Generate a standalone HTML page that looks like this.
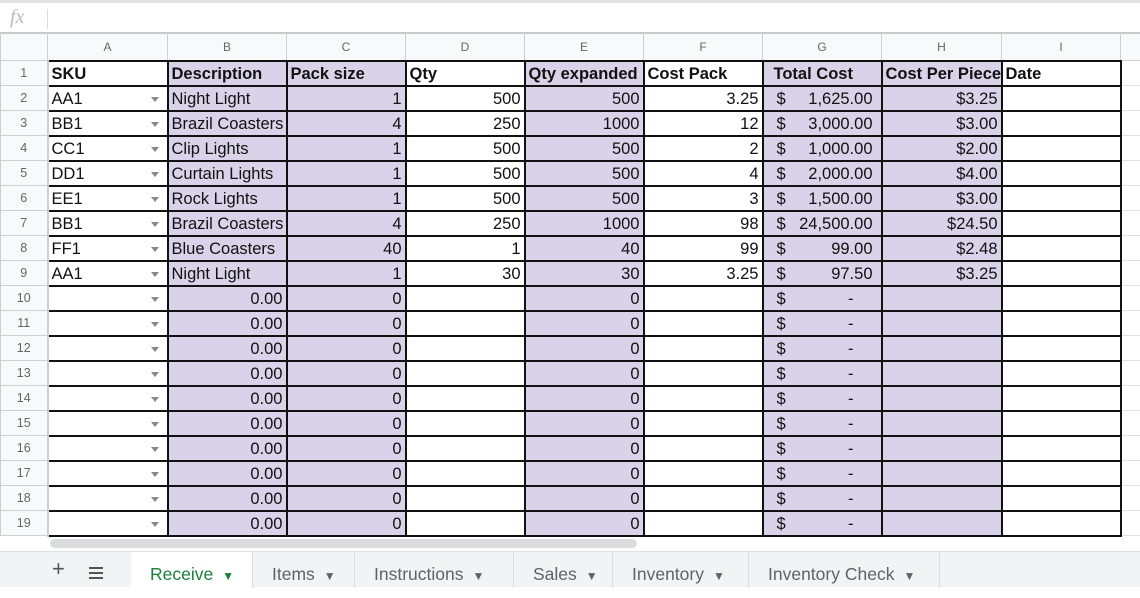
<!DOCTYPE html>
<html><head><meta charset="utf-8"><style>
*{margin:0;padding:0;box-sizing:border-box}
body{width:1140px;height:587px;overflow:hidden;background:#fff;font-family:"Liberation Sans",Arial,sans-serif;position:relative}
.fx{position:absolute;left:0;top:0;width:1140px;height:33px;border-top:3px solid #e3e3e3;border-bottom:1px solid #c8c8c8}
.fx i{position:absolute;left:10px;top:3px;font-family:"Liberation Serif",serif;font-size:20px;color:#bbb}
.fx b{position:absolute;left:47px;top:6px;width:1px;height:20px;background:#ddd}
table{position:absolute;left:0;top:33px;width:1140px;border-collapse:collapse;table-layout:fixed}
td{height:25px;font-size:16.5px;color:#111;padding:3px 3px 0;white-space:nowrap;overflow:hidden;border:2px solid #111;position:relative}
tr.h td{height:27px;padding:0;background:#f8f9fa;color:#666;font-size:12px;text-align:center;border:1px solid #cfcfcf;font-weight:normal}
td.rh{padding:0;background:#f8f9fa;color:#666;font-size:12.5px;text-align:center;border:1px solid #cfcfcf;border-right:2px solid #cfcfcf}
td.p{background:#d9d2e9}
td.r{text-align:right}
td.x{border:1px solid #e2e2e2;border-left:2px solid #111}
tr.b td:not(.rh):not(.x){font-weight:bold}
.dd:after{content:"";position:absolute;right:8px;top:10px;border:4px solid transparent;border-top:5px solid #888}
.g{display:flex;justify-content:space-between;padding:0 5px 0 10px}
.g.d{padding-right:24px}
.sb{position:absolute;left:50px;top:539px;width:587px;height:9px;border-radius:5px;background:#dadce0}
.tabs{position:absolute;left:0;top:551px;width:1140px;height:36px;background:#f1f3f4;border-top:1px solid #e0e0e0}
.tab{position:absolute;top:0;height:36px;line-height:44px;font-size:17.5px;color:#5f6368;border-right:1px solid #ddd;padding-left:19px}
.tab.a{background:#fff;color:#188038}
.tab span{font-size:12px;margin-left:9px}
</style></head><body>
<div class="fx"><i>fx</i><b></b></div>
<table>
<colgroup><col style="width:47px"><col style="width:120px"><col style="width:119px"><col style="width:119px"><col style="width:119px"><col style="width:119px"><col style="width:119px"><col style="width:119px"><col style="width:120px"><col style="width:119px"><col style="width:20px"></colgroup>
<tr class="h"><td></td><td>A</td><td>B</td><td>C</td><td>D</td><td>E</td><td>F</td><td>G</td><td>H</td><td>I</td><td></td></tr>
<tr class="b"><td class="rh">1</td><td>SKU</td><td class="p">Description</td><td class="p">Pack size</td><td>Qty</td><td class="p">Qty expanded</td><td>Cost Pack</td><td class="p" style="padding-left:10px">Total Cost</td><td class="p">Cost Per Piece</td><td>Date</td><td class="x"></td></tr>
<tr><td class="rh">2</td><td class="dd">AA1</td><td class="p">Night Light</td><td class="p r">1</td><td class="r">500</td><td class="p r">500</td><td class="r">3.25</td><td class="p"><div class="g"><span>$</span><span>1,625.00</span></div></td><td class="p r">$3.25</td><td></td><td class="x"></td></tr>
<tr><td class="rh">3</td><td class="dd">BB1</td><td class="p">Brazil Coasters</td><td class="p r">4</td><td class="r">250</td><td class="p r">1000</td><td class="r">12</td><td class="p"><div class="g"><span>$</span><span>3,000.00</span></div></td><td class="p r">$3.00</td><td></td><td class="x"></td></tr>
<tr><td class="rh">4</td><td class="dd">CC1</td><td class="p">Clip Lights</td><td class="p r">1</td><td class="r">500</td><td class="p r">500</td><td class="r">2</td><td class="p"><div class="g"><span>$</span><span>1,000.00</span></div></td><td class="p r">$2.00</td><td></td><td class="x"></td></tr>
<tr><td class="rh">5</td><td class="dd">DD1</td><td class="p">Curtain Lights</td><td class="p r">1</td><td class="r">500</td><td class="p r">500</td><td class="r">4</td><td class="p"><div class="g"><span>$</span><span>2,000.00</span></div></td><td class="p r">$4.00</td><td></td><td class="x"></td></tr>
<tr><td class="rh">6</td><td class="dd">EE1</td><td class="p">Rock Lights</td><td class="p r">1</td><td class="r">500</td><td class="p r">500</td><td class="r">3</td><td class="p"><div class="g"><span>$</span><span>1,500.00</span></div></td><td class="p r">$3.00</td><td></td><td class="x"></td></tr>
<tr><td class="rh">7</td><td class="dd">BB1</td><td class="p">Brazil Coasters</td><td class="p r">4</td><td class="r">250</td><td class="p r">1000</td><td class="r">98</td><td class="p"><div class="g"><span>$</span><span>24,500.00</span></div></td><td class="p r">$24.50</td><td></td><td class="x"></td></tr>
<tr><td class="rh">8</td><td class="dd">FF1</td><td class="p">Blue Coasters</td><td class="p r">40</td><td class="r">1</td><td class="p r">40</td><td class="r">99</td><td class="p"><div class="g"><span>$</span><span>99.00</span></div></td><td class="p r">$2.48</td><td></td><td class="x"></td></tr>
<tr><td class="rh">9</td><td class="dd">AA1</td><td class="p">Night Light</td><td class="p r">1</td><td class="r">30</td><td class="p r">30</td><td class="r">3.25</td><td class="p"><div class="g"><span>$</span><span>97.50</span></div></td><td class="p r">$3.25</td><td></td><td class="x"></td></tr>
<tr><td class="rh">10</td><td class="dd"></td><td class="p r">0.00</td><td class="p r">0</td><td></td><td class="p r">0</td><td></td><td class="p"><div class="g d"><span>$</span><span>-</span></div></td><td class="p"></td><td></td><td class="x"></td></tr>
<tr><td class="rh">11</td><td class="dd"></td><td class="p r">0.00</td><td class="p r">0</td><td></td><td class="p r">0</td><td></td><td class="p"><div class="g d"><span>$</span><span>-</span></div></td><td class="p"></td><td></td><td class="x"></td></tr>
<tr><td class="rh">12</td><td class="dd"></td><td class="p r">0.00</td><td class="p r">0</td><td></td><td class="p r">0</td><td></td><td class="p"><div class="g d"><span>$</span><span>-</span></div></td><td class="p"></td><td></td><td class="x"></td></tr>
<tr><td class="rh">13</td><td class="dd"></td><td class="p r">0.00</td><td class="p r">0</td><td></td><td class="p r">0</td><td></td><td class="p"><div class="g d"><span>$</span><span>-</span></div></td><td class="p"></td><td></td><td class="x"></td></tr>
<tr><td class="rh">14</td><td class="dd"></td><td class="p r">0.00</td><td class="p r">0</td><td></td><td class="p r">0</td><td></td><td class="p"><div class="g d"><span>$</span><span>-</span></div></td><td class="p"></td><td></td><td class="x"></td></tr>
<tr><td class="rh">15</td><td class="dd"></td><td class="p r">0.00</td><td class="p r">0</td><td></td><td class="p r">0</td><td></td><td class="p"><div class="g d"><span>$</span><span>-</span></div></td><td class="p"></td><td></td><td class="x"></td></tr>
<tr><td class="rh">16</td><td class="dd"></td><td class="p r">0.00</td><td class="p r">0</td><td></td><td class="p r">0</td><td></td><td class="p"><div class="g d"><span>$</span><span>-</span></div></td><td class="p"></td><td></td><td class="x"></td></tr>
<tr><td class="rh">17</td><td class="dd"></td><td class="p r">0.00</td><td class="p r">0</td><td></td><td class="p r">0</td><td></td><td class="p"><div class="g d"><span>$</span><span>-</span></div></td><td class="p"></td><td></td><td class="x"></td></tr>
<tr><td class="rh">18</td><td class="dd"></td><td class="p r">0.00</td><td class="p r">0</td><td></td><td class="p r">0</td><td></td><td class="p"><div class="g d"><span>$</span><span>-</span></div></td><td class="p"></td><td></td><td class="x"></td></tr>
<tr><td class="rh">19</td><td class="dd"></td><td class="p r">0.00</td><td class="p r">0</td><td></td><td class="p r">0</td><td></td><td class="p"><div class="g d"><span>$</span><span>-</span></div></td><td class="p"></td><td></td><td class="x"></td></tr>
</table>
<div class="sb"></div>
<div class="tabs">
<div style="position:absolute;left:52px;top:4px;font-size:22px;color:#555">+</div>
<div style="position:absolute;left:89px;top:15px;width:14px;height:12px;border-top:2px solid #555;border-bottom:2px solid #555"><div style="margin-top:3px;height:2px;background:#555"></div></div>
<div class="tab a" style="left:131px;width:122px">Receive<span>▼</span></div>
<div class="tab" style="left:253px;width:102px">Items<span>▼</span></div>
<div class="tab" style="left:355px;width:159px">Instructions<span>▼</span></div>
<div class="tab" style="left:514px;width:99px">Sales<span>▼</span></div>
<div class="tab" style="left:613px;width:136px">Inventory<span>▼</span></div>
<div class="tab" style="left:749px;width:191px">Inventory Check<span>▼</span></div>
</div>
</body></html>
